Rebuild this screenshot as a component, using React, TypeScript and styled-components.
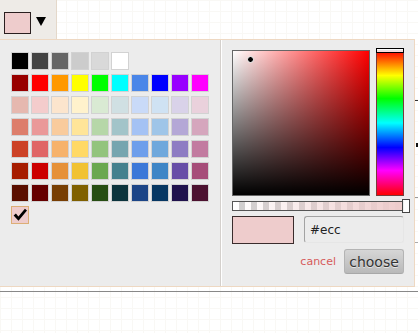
import React from 'react'
import styled, { createGlobalStyle } from 'styled-components'

const GlobalStyle = createGlobalStyle`
  html, body {
    margin: 0;
    padding: 0;
  }
  body {
    width: 418px;
    height: 333px;
    overflow: hidden;
    font-family: "DejaVu Sans", "Liberation Sans", sans-serif;
    background-color: #fff;
    background-image:
      linear-gradient(#f9f8f5 1px, transparent 1px),
      linear-gradient(90deg, #f9f8f5 1px, transparent 1px);
    background-size: 11px 11px;
  }
`

const Page = styled.div`
  position: relative;
  width: 418px;
  height: 333px;
`

const Toolbar = styled.div`
  display: flex;
  height: 39px;
`

const Replacer = styled.div`
  display: flex;
  align-items: flex-start;
  padding: 12px 4px 5px 4px;
  background: #eeebe7;
  border-right: 1px solid #e4d8ca;
  box-sizing: border-box;
  height: 39px;
`

const ReplacerPreview = styled.div<{ $color: string }>`
  width: 25px;
  height: 20px;
  border: 1px solid #2a1f1f;
  background: ${p => p.$color};
`

const DropArrow = styled.svg`
  display: block;
  margin: 5px 6px 0 5px;
`

/* ---------- the sheet lying under the popup ---------- */

const Sheet = styled.div`
  display: flex;
  flex-direction: column;
`

const SheetRow = styled.div<{ $h: number; $line: string }>`
  display: flex;
  justify-content: flex-end;
  align-items: flex-start;
  height: ${p => p.$h}px;
  border-bottom: 1px solid ${p => p.$line};
`

const SheetMark = styled.span`
  width: 2px;
  height: 4px;
  margin-top: 42px;
  background: #111;
`

/* ---------- popup ---------- */

const Container = styled.div`
  position: absolute;
  top: 39px;
  left: -1px;
  display: flex;
  align-items: stretch;
  background: #ececec;
  border: 1px solid #eed8c2;
`

const PaletteSide = styled.div`
  width: 200px;
  padding: 10px;
  border-right: 1px solid #d4d0cc;
`

const PaletteRow = styled.div`
  display: flex;
`

const Swatch = styled.span<{ $color: string; $active?: boolean }>`
  position: relative;
  display: block;
  width: 16px;
  height: 16px;
  margin: 2px 1px;
  border: 1px solid ${p => (p.$active ? '#dcae76' : '#d2d2d2')};
  background: ${p => p.$color};
  svg {
    position: absolute;
    left: 0;
    top: 0;
  }
`

const PickerSide = styled.div`
  width: 172px;
  padding: 10px 10px 12px 10px;
  border-left: 1px solid #fff;
  display: flex;
  flex-direction: column;
`

const ColorArea = styled.div`
  display: flex;
  gap: 6px;
  height: 146px;
`

const SatVal = styled.div`
  position: relative;
  width: 136px;
  height: 144px;
  border: 1px solid #666;
  background:
    linear-gradient(to top, #000, rgba(0, 0, 0, 0)),
    linear-gradient(to right, #fff, rgba(255, 255, 255, 0)),
    #f00;
`

const Dragger = styled.span`
  position: absolute;
  left: 14px;
  top: 5px;
  width: 5px;
  height: 5px;
  border-radius: 50%;
  border: 1px solid #fff;
  background: #000;
`

const Hue = styled.div`
  position: relative;
  width: 26px;
  height: 144px;
  border: 1px solid #7a3a3a;
  background: linear-gradient(
    to bottom,
    #ff0000 0%,
    #ffff00 17%,
    #00ff00 33%,
    #00ffff 50%,
    #0000ff 67%,
    #ff00ff 83%,
    #ff0000 100%
  );
`

const HueSlider = styled.span`
  position: absolute;
  top: -3px;
  left: -1px;
  right: -1px;
  height: 3px;
  border: 1px solid #000;
  background: rgba(255, 255, 255, 0.85);
`

const Alpha = styled.div<{ $color: string }>`
  position: relative;
  margin-top: 5px;
  height: 8px;
  border: 1px solid #555;
  background:
    linear-gradient(to right, rgba(238, 204, 204, 0), ${p => p.$color}),
    repeating-linear-gradient(
      to right,
      #fff 0,
      #fff 6px,
      #cfcfcf 6px,
      #cfcfcf 12px
    );
`

const AlphaHandle = styled.span`
  position: absolute;
  top: -3px;
  right: -7px;
  width: 6px;
  height: 12px;
  border: 1px solid #444;
  background: rgba(255, 255, 255, 0.9);
`

const InputRow = styled.div`
  display: flex;
  gap: 10px;
  margin-top: 5px;
  height: 28px;
`

const CurrentColor = styled.div<{ $color: string }>`
  width: 60px;
  height: 26px;
  border: 1px solid #3a2c2c;
  background: ${p => p.$color};
`

const HexInput = styled.input`
  box-sizing: border-box;
  width: 100px;
  height: 27px;
  margin: 0;
  padding: 4px 5px;
  border: 1px solid;
  border-color: #a3a3a3 #e6e6e6 #e6e6e6 #a3a3a3;
  border-radius: 3px;
  background: transparent;
  color: #222;
  font-family: "DejaVu Sans", sans-serif;
  font-size: 12px;
  outline: none;
`

const ButtonRow = styled.div`
  display: flex;
  justify-content: flex-end;
  align-items: center;
  margin-top: 5px;
  height: 25px;
`

const CancelLink = styled.a`
  font-size: 11px;
  color: #d65a5a;
  margin-right: 8px;
  text-decoration: none;
  cursor: pointer;
`

const ChooseButton = styled.button`
  box-sizing: border-box;
  width: 60px;
  height: 25px;
  padding: 0 4px;
  border: 1px solid #b4b4b4;
  border-bottom-color: #a8a8a8;
  border-radius: 3px;
  background: linear-gradient(to bottom, #d6d6d6, #b9b9b9);
  color: #333;
  font-family: "DejaVu Sans", sans-serif;
  font-size: 14px;
  line-height: 1;
  text-shadow: 0 1px 0 #e4e4e4;
  cursor: pointer;
`

const palette: string[][] = [
  ['#000000', '#434343', '#666666', '#cccccc', '#d9d9d9', '#ffffff'],
  ['#980000', '#ff0000', '#ff9900', '#ffff00', '#00ff00', '#00ffff', '#4a86e8', '#0000ff', '#9900ff', '#ff00ff'],
  ['#e6b8af', '#f4cccc', '#fce5cd', '#fff2cc', '#d9ead3', '#d0e0e3', '#c9daf8', '#cfe2f3', '#d9d2e9', '#ead1dc'],
  ['#dd7e6b', '#ea9999', '#f9cb9c', '#ffe599', '#b6d7a8', '#a2c4c9', '#a4c2f4', '#9fc5e8', '#b4a7d6', '#d5a6bd'],
  ['#cc4125', '#e06666', '#f6b26b', '#ffd966', '#93c47d', '#76a5af', '#6d9eeb', '#6fa8dc', '#8e7cc3', '#c27ba0'],
  ['#a61c00', '#cc0000', '#e69138', '#f1c232', '#6aa84f', '#45818e', '#3c78d8', '#3d85c6', '#674ea7', '#a64d79'],
  ['#5b0f00', '#660000', '#783f04', '#7f6000', '#274e13', '#0c343d', '#1c4587', '#073763', '#20124d', '#4c1130'],
]

const current = '#eecccc'

const CheckIcon = () => (
  <svg width="16" height="16" viewBox="0 0 16 16">
    <path d="M1.6 8.6 L3.9 6.6 L6.4 9.6 L12.9 1.8 L15 3.4 L6.5 13.8 Z" fill="#000" />
  </svg>
)

export default function App() {
  return (
    <Page>
      <GlobalStyle />
      <Toolbar>
        <Replacer>
          <ReplacerPreview $color={current} />
          <DropArrow width="10" height="9" viewBox="0 0 10 9">
            <polygon points="0,0 10,0 5,9" fill="#000" />
          </DropArrow>
        </Replacer>
      </Toolbar>

      <Sheet>
        <SheetRow $h={61} $line="#333" />
        <SheetRow $h={96} $line="#9a9a9a">
          <SheetMark />
        </SheetRow>
        <SheetRow $h={44} $line="#aaa" />
        <SheetRow $h={48} $line="#888" />
      </Sheet>

      <Container>
        <PaletteSide>
          {palette.map((row, i) => (
            <PaletteRow key={i}>
              {row.map(c => (
                <Swatch key={c} $color={c} />
              ))}
            </PaletteRow>
          ))}
          <PaletteRow>
            <Swatch $color={current} $active>
              <CheckIcon />
            </Swatch>
          </PaletteRow>
        </PaletteSide>

        <PickerSide>
          <ColorArea>
            <SatVal>
              <Dragger />
            </SatVal>
            <Hue>
              <HueSlider />
            </Hue>
          </ColorArea>
          <Alpha $color={current}>
            <AlphaHandle />
          </Alpha>
          <InputRow>
            <CurrentColor $color={current} />
            <HexInput value="#ecc" readOnly />
          </InputRow>
          <ButtonRow>
            <CancelLink>cancel</CancelLink>
            <ChooseButton>choose</ChooseButton>
          </ButtonRow>
        </PickerSide>
      </Container>
    </Page>
  )
}
